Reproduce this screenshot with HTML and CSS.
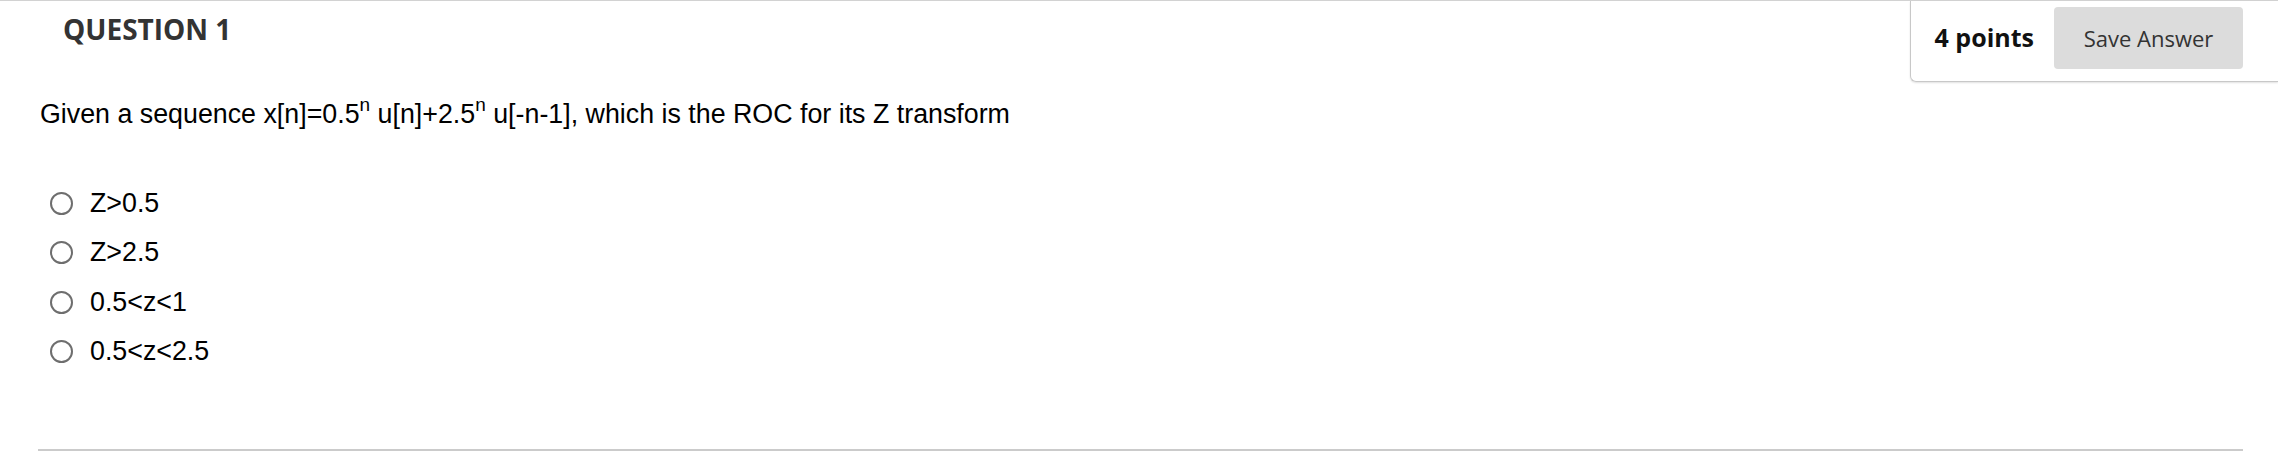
FILE: index.html
```html
<!DOCTYPE html>
<html lang="en">

<head>
    <meta charset="UTF-8">
    <meta name="viewport" content="width=device-width, initial-scale=1.0">
    <title>Question 1</title>
    <link rel="stylesheet" href="styles.css">
</head>

<body>
    <div class="question">
        <div class="q-header">
            <h3 class="q-title">QUESTION 1</h3>
            <div class="q-points">
                <span class="points">4 points</span>
                <button class="save-btn" type="button">Save Answer</button>
            </div>
        </div>
        <div class="q-body">
            <p class="q-text">Given a sequence x[n]=0.5<sup>n</sup> u[n]+2.5<sup>n</sup> u[-n-1], which is the ROC for its Z transform</p>
            <ul class="answers">
                <li><label><input type="radio" name="ans"> Z&gt;0.5</label></li>
                <li><label><input type="radio" name="ans"> Z&gt;2.5</label></li>
                <li><label><input type="radio" name="ans"> 0.5&lt;z&lt;1</label></li>
                <li><label><input type="radio" name="ans"> 0.5&lt;z&lt;2.5</label></li>
            </ul>
            <hr class="q-end">
        </div>
    </div>
</body>

</html>
```

FILE: styles.css
```css
html,
body {
    margin: 0;
    background: #fff;
}

.question {
    border-top: 1px solid #d2d2d2;
}

.q-header {
    display: flex;
    justify-content: space-between;
    align-items: flex-start;
}

.q-title {
    margin: 9px 0 0 63px;
    font-family: "Open Sans", sans-serif;
    font-weight: 700;
    font-size: 28px;
    line-height: 38px;
    color: #333;
}

.q-points {
    display: flex;
    align-items: baseline;
    gap: 20px;
    padding: 6px 35px 12px 24px;
    border-left: 1px solid #c8c8c8;
    border-bottom: 1px solid #c8c8c8;
    border-radius: 0 0 0 6px;
    box-shadow: 0 1px 2px rgba(0, 0, 0, 0.12);
}

.points {
    font-family: "Open Sans", sans-serif;
    font-weight: 700;
    font-size: 25px;
    color: #111;
}

.save-btn {
    width: 189px;
    height: 62px;
    border: none;
    border-radius: 4px;
    background: #dcdcdc;
    font-family: "Open Sans", sans-serif;
    font-size: 22px;
    color: #333;
    padding: 0;
}

.q-body {
    padding: 0 35px 0 38px;
    font-family: "Liberation Sans", Arial, sans-serif;
    font-size: 26.8px;
    color: #000;
}

.q-text {
    margin: 17px 0 0 0;
    padding-left: 2px;
    line-height: 31px;
}

.q-text sup {
    font-size: 19px;
    line-height: 0;
    vertical-align: 12px;
}

.answers {
    list-style: none;
    margin: 58px 0 0 0;
    padding: 0 0 0 12px;
    display: flex;
    flex-direction: column;
    gap: 18.3px;
}

.answers label {
    display: flex;
    align-items: center;
    gap: 17px;
    line-height: 31px;
}

.answers input {
    appearance: none;
    -webkit-appearance: none;
    flex: none;
    width: 23px;
    height: 23px;
    margin: 0;
    border: 2px solid #6e6e6e;
    border-radius: 50%;
    box-sizing: border-box;
}

.q-end {
    margin: 82px 0 0 0;
    border: none;
    height: 2px;
    background: #cbcbcb;
}
```
